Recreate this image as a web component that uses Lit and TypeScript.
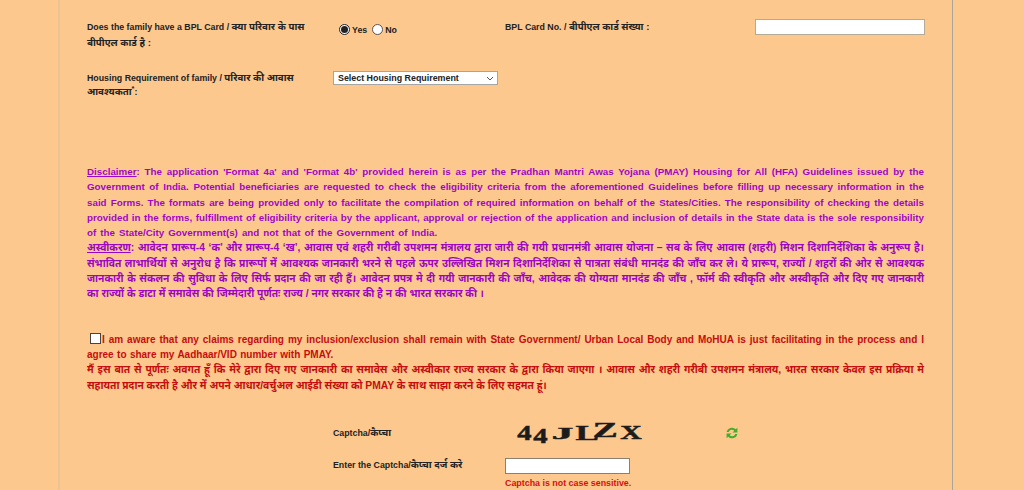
import { LitElement, html, css } from "lit";
import { customElement } from "lit/decorators.js";

const DISCLAIMER_LINES = [
  "The application 'Format 4a' and 'Format 4b' provided herein is as per the Pradhan Mantri Awas Yojana (PMAY) Housing for All (HFA) Guidelines issued by the",
  "Government of India. Potential beneficiaries are requested to check the eligibility criteria from the aforementioned Guidelines before filling up necessary information in the",
  "said Forms. The formats are being provided only to facilitate the compilation of required information on behalf of the States/Cities. The responsibility of checking the details",
  "provided in the forms, fulfillment of eligibility criteria by the applicant, approval or rejection of the application and inclusion of details in the State data is the sole responsibility",
];

@customElement("app-root")
export class AppRoot extends LitElement {
  static styles = css`
    :host { display: block; height: 490px; overflow: hidden; background: #fdc88d; font-family: "Liberation Sans", "Noto Sans", sans-serif; color: #222; }
    .panel { box-sizing: border-box; height: 490px; margin: 0 71px 0 58px; border-left: 2px solid #ebc196; border-right: 1px solid #a9a49c; padding: 19px 28px 0 27px; font-size: 8.8px; font-weight: bold; overflow: hidden; }
    .d { font-size: 9.7px; }
    .row { display: grid; grid-template-columns: 246px 172px 250px 170px; line-height: 15px; }
    .row.two { margin-top: 20px; height: 95px; line-height: 14px; }
    .lbl { width: 224px; }
    sup { line-height: 0; }
    .radios { display: flex; align-items: center; gap: 2px; height: 21px; padding-left: 6px; }
    .radios .dot { width: 11px; height: 11px; box-sizing: border-box; border-radius: 50%; border: 1px solid #555; background: #fff; display: flex; align-items: center; justify-content: center; }
    .radios .dot.on { border-color: #222; }
    .radios .dot.on::after { content: ""; width: 7px; height: 7px; border-radius: 50%; background: #222; }
    .radios .txt { padding-top: 2px; }
    .radios .sp { width: 1px; }
    .select { box-sizing: border-box; width: 165px; height: 14px; background: #fff; border: 1px solid #a5a5a5; display: flex; align-items: center; justify-content: space-between; padding: 0 3px 0 4px; color: #222; font-size: 8.9px; }
    .input { display: block; box-sizing: border-box; width: 170px; height: 16px; background: #fff; border: 1px solid #b5a997; }
    .bpl { white-space: nowrap; }
    .disc { color: #a006c8; font-size: 9.8px; line-height: 15.3px; text-align: justify; margin-top: -2px; }
    .ln { display: block; text-align-last: justify; }
    .tail { word-spacing: 1.3px; }
    u { text-decoration: underline; }
    .hi { display: block; color: #9b06c4; font-size: 10.3px; }
    .aware { margin-top: 30px; color: #c60d0d; font-size: 10px; word-spacing: 0.6px; line-height: 15.3px; text-align: justify; }
    .aware .hr { font-size: 10.3px; word-spacing: 0; }
    .cb { display: inline-block; box-sizing: border-box; width: 11px; height: 11px; border: 1px solid #444; background: #fff; margin: 0 1px 0 3px; vertical-align: -1px; }
    .cap { display: grid; grid-template-columns: 172px 125px 1fr; margin: 29px 0 0 246px; align-items: center; }
    .cap.l2 { margin-top: 14px; align-items: start; line-height: 14px; }
    .glyphs { position: relative; font-family: "Liberation Serif", serif; font-size: 22px; color: #1c1c1c; height: 22px; -webkit-text-stroke: 0.5px #1c1c1c; }
    .glyphs b { position: absolute; top: -1px; line-height: 24px; }
    .g1 { left: 14px; transform: scale(1.3, 1); }
    .g2 { left: 30px; top: 2px !important; transform: scale(1.3, 1); }
    .g3 { left: 52px; transform: scale(2, .8); }
    .g4 { left: 75px; transform: scale(1.6, 1); }
    .g5 { left: 93px; top: -4px !important; transform: scale(1.7, .95); }
    .g6 { left: 118px; transform: scale(1.35, .9); }
    .ic { margin-left: 95px; display: block; }
    .err { color: #d4120e; margin-left: 418px; line-height: 14px; margin-top: 2px; font-size: 8.9px; }
    .input2 { display: block; box-sizing: border-box; width: 125px; height: 16px; background: #fff; border: 1px solid #8c7f70; }
  `;
  render() {
    return html`<div class="panel">
      <div class="row">
        <div class="lbl">Does the family have a BPL Card / <span class="d">क्या परिवार के पास बीपीएल कार्ड है :</span></div>
        <div class="radios"><span class="dot on"></span><span class="txt">Yes</span><span class="sp"></span><span class="dot"></span><span class="txt">No</span></div>
        <div class="bpl">BPL Card No. / <span class="d">बीपीएल कार्ड संख्या :</span></div>
        <span class="input"></span>
      </div>
      <div class="row two">
        <div class="lbl">Housing Requirement of family / <span class="d">परिवार की आवास आवश्यकता</span><sup>*</sup>:</div>
        <div class="select"><span>Select Housing Requirement</span>
          <svg width="8" height="5" viewBox="0 0 8 5"><path d="M1 1l3 3 3-3" fill="none" stroke="#555" stroke-width="1"/></svg></div>
      </div>
      <div class="disc">
        ${DISCLAIMER_LINES.map((l, i) => html`<span class="ln">${i === 0 ? html`<u>Disclaimer</u>: ` : ""}${l}</span>`)}
        <span class="tail">of the State/City Government(s) and not that of the Government of India.</span>
        <span class="hi"><u>अस्वीकरण</u>: आवेदन प्रारूप-4 ‘क’ और प्रारूप-4 ‘ख’, आवास एवं शहरी गरीबी उपशमन मंत्रालय द्वारा जारी की गयी प्रधानमंत्री आवास योजना – सब के लिए आवास (शहरी) मिशन दिशानिर्देशिका के अनुरूप है। संभावित लाभार्थियों से अनुरोध है कि प्रारूपों में आवश्यक जानकारी भरने से पहले ऊपर उल्लिखित मिशन दिशानिर्देशिका से पात्रता संबंधी मानदंड की जाँच कर ले। ये प्रारूप, राज्यों / शहरों की ओर से आवश्यक जानकारी के संकलन की सुविधा के लिए सिर्फ प्रदान की जा रही हैं। आवेदन प्रपत्र मे दी गयी जानकारी की जाँच, आवेदक की योग्यता मानदंड की जाँच , फॉर्म की स्वीकृति और अस्वीकृति और दिए गए जानकारी का&nbsp;राज्यों के डाटा में समावेस की जिम्मेदारी पूर्णतः राज्य / नगर सरकार की है न की भारत सरकार की ।</span>
      </div>
      <div class="aware"><span class="cb"></span>I am aware that any claims regarding my inclusion/exclusion shall remain with State Government/ Urban Local Body and MoHUA is just facilitating in the process and I agree to share my Aadhaar/VID number with PMAY.<br><span class="hr">मैं इस बात से पूर्णतः अवगत हूँ कि मेरे द्वारा दिए गए जानकारी का समावेस और अस्वीकार राज्य सरकार के द्वारा किया जाएगा । आवास और शहरी गरीबी उपशमन मंत्रालय, भारत सरकार केवल इस प्रक्रिया मे सहायता प्रदान करती है और में अपने आधार/वर्चुअल आईडी संख्या को PMAY के साथ साझा करने के लिए सहमत हूं।</span></div>
      <div class="cap">
        <div>Captcha/<span class="d">कैप्चा</span></div>
        <div class="glyphs"><b class="g1">4</b><b class="g2">4</b><b class="g3">J</b><b class="g4">L</b><b class="g5">Z</b><b class="g6">X</b></div>
        <svg class="ic" width="14" height="14" viewBox="0 0 14 14"><path d="M1.5 6a5.6 5.6 0 0 1 9.3-2.8L12.4 1.7v4.8H7.6l1.7-1.7A3.4 3.4 0 0 0 3.7 6zM12.5 8a5.6 5.6 0 0 1-9.3 2.8l-1.6 1.5V7.5h4.8l-1.7 1.7A3.4 3.4 0 0 0 10.3 8z" fill="#3fae2a"/></svg>
      </div>
      <div class="cap l2"><div>Enter the Captcha/<span class="d">कैप्चा दर्ज करे</span></div><span class="input2"></span></div>
      <div class="err">Captcha is not case sensitive.</div>
    </div>`;
  }
}
